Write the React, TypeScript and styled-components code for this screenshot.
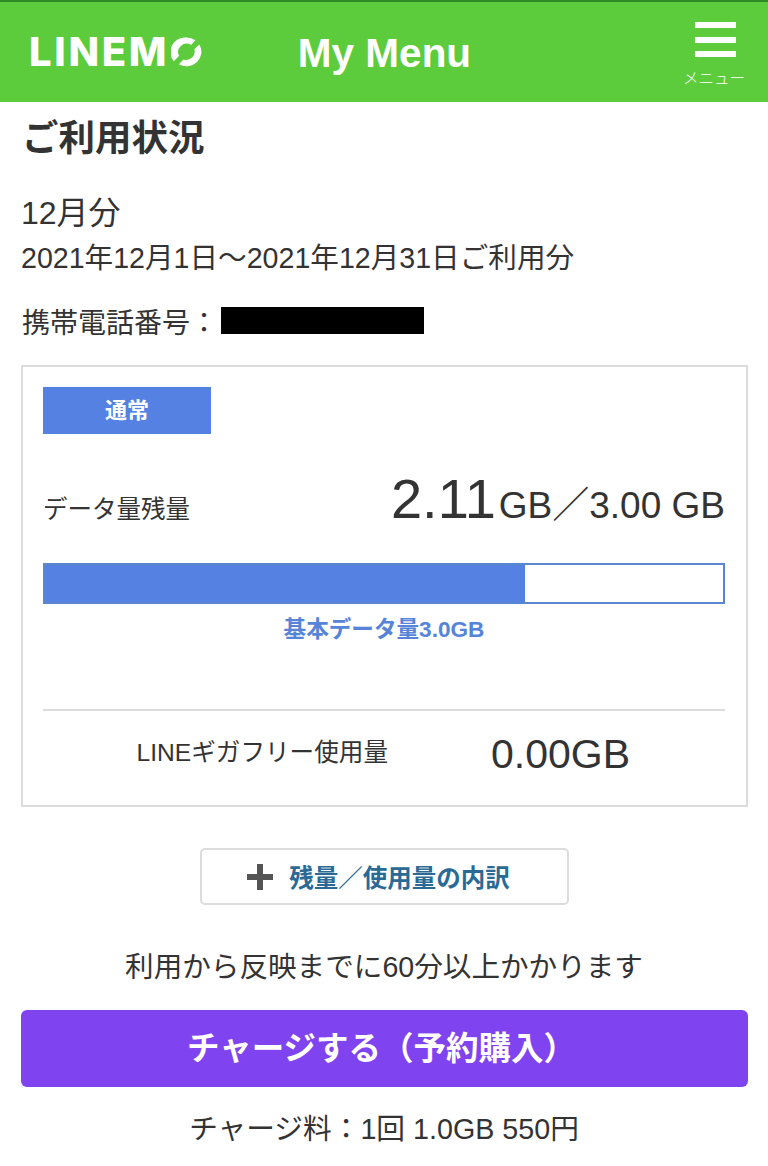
import React from "react";
import styled, { createGlobalStyle } from "styled-components";

const Global = createGlobalStyle`
  html, body { margin: 0; padding: 0; background: #fff; }
  body { font-family: "Liberation Sans", "Noto Sans CJK JP", sans-serif; color: #333; }
  * { box-sizing: border-box; }
`;

const Page = styled.div`
  width: 768px;
  height: 1166px;
  overflow: hidden;
  background: #fff;
`;

const Header = styled.header`
  height: 102px;
  background: #5ccc3c;
  border-top: 2px solid #2f8a2a;
  display: grid;
  grid-template-columns: 1fr auto 1fr;
  align-items: center;
  padding: 0 23px 0 29px;
  color: #fff;
`;

const Logo = styled.div`
  display: flex;
  align-items: center;
  gap: 2px;
  font-family: "Inter", sans-serif;
  font-weight: 800;
  font-size: 40px;
  letter-spacing: 2.7px;
  line-height: 1;
`;

const HeaderTitle = styled.h1`
  margin: 2px 5px 0 0;
  font-size: 40.5px;
  font-weight: 700;
  line-height: 1;
`;

const MenuButton = styled.div`
  justify-self: end;
  display: flex;
  flex-direction: column;
  align-items: center;
  gap: 11px;
  margin-top: 4px;
`;

const MenuBars = styled.div`
  width: 41px;
  height: 35px;
  margin-left: 3px;
  display: flex;
  flex-direction: column;
  justify-content: space-between;
`;

const MenuBar = styled.span`
  display: block;
  height: 6px;
  background: #fff;
`;

const MenuLabel = styled.span`
  font-size: 15.5px;
  line-height: 18px;
  font-weight: 300;
  font-family: "Noto Sans CJK JP", sans-serif;
`;

const Content = styled.main`
  padding: 0 20px;
`;

const Title = styled.h2`
  margin: 13px 0 0 2px;
  font-size: 36.5px;
  line-height: 48px;
  font-weight: 700;
  color: #333;
`;

const MonthLine = styled.div`
  margin: 28px 0 0 1px;
  font-size: 32px;
  line-height: 44px;
`;

const PeriodLine = styled.div`
  margin: 1px 0 0 1px;
  font-size: 28.6px;
  line-height: 44px;
  white-space: nowrap;
`;

const PhoneRow = styled.div`
  margin: 19px 0 0 2px;
  height: 44px;
  display: flex;
  align-items: center;
  font-size: 28px;
`;

const Redaction = styled.span`
  display: block;
  width: 203px;
  height: 27px;
  background: #000;
  margin: 0 0 2px 3px;
`;

const Card = styled.section`
  margin: 22px 0 0 1px;
  width: 727px;
  height: 442px;
  border: 2px solid #dcdcdc;
  padding: 20px 21px 0 20px;
`;

const Badge = styled.div`
  width: 168px;
  height: 47px;
  background: #5481e2;
  color: #fff;
  font-size: 22px;
  font-weight: 700;
  display: flex;
  align-items: center;
  justify-content: center;
  padding-bottom: 6px;
`;

const DataRow = styled.div`
  margin-top: 32px;
  height: 95px;
  display: flex;
  align-items: baseline;
  justify-content: space-between;
`;

const DataLabel = styled.span`
  font-size: 24.5px;
`;

const DataValue = styled.span`
  font-size: 37px;
  white-space: nowrap;
`;

const BigNumber = styled.span`
  font-size: 56px;
  margin-right: 3px;
`;

const Bar = styled.div`
  margin-top: 2px;
  height: 41px;
  border: 2px solid #5a86d0;
  background: #fff;
`;

const BarFill = styled.div`
  height: 100%;
  background: #5481e2;
`;

const BarCaption = styled.div`
  margin-top: 9px;
  text-align: center;
  color: #5684d8;
  font-size: 22.6px;
  font-weight: 700;
  line-height: 34px;
`;

const FreeRow = styled.div`
  margin-top: 62px;
  height: 88px;
  border-top: 2px solid #dcdcdc;
  display: grid;
  grid-template-columns: 345px 1fr;
  align-items: center;
`;

const FreeLabel = styled.span`
  font-size: 24.6px;
  text-align: right;
  margin-bottom: 8px;
`;

const FreeValue = styled.span`
  font-size: 41px;
  margin-left: 103px;
`;

const DetailButton = styled.button`
  display: flex;
  align-items: center;
  justify-content: center;
  gap: 15px;
  width: 369px;
  height: 57px;
  margin: 41px auto 0;
  background: #fff;
  border: 2px solid #dcdcdc;
  border-radius: 5px;
  font-family: inherit;
  font-size: 24.5px;
  font-weight: 700;
  color: #2a6a94;
  padding: 0 12px 0 0;
`;

const PlusIcon = styled.svg`
  width: 28px;
  height: 28px;
  fill: #555;
  flex: none;
`;

const Note = styled.p`
  margin: 40px 0 0;
  text-align: center;
  font-size: 28.6px;
  line-height: 44px;
`;

const ChargeButton = styled.button`
  display: block;
  width: 727px;
  height: 77px;
  margin: 21px 0 0 1px;
  border: 0;
  border-radius: 6px;
  background: #7f43ef;
  color: #fff;
  font-family: inherit;
  font-size: 32.5px;
  font-weight: 700;
  padding: 0 6px 6px 0;
`;

const ChargeNote = styled.p`
  margin: 20px 0 0;
  text-align: center;
  font-size: 28.7px;
  line-height: 44px;
`;

const LogoO = () => (
  <svg width="31" height="30" viewBox="0 0 30 30" preserveAspectRatio="none" aria-hidden="true">
    <path
      d="M15 0.5a14.5 14.5 0 0 1 8.6 2.8l-4.2 4.6a8.3 8.3 0 0 0-11.6 10.9l-5 5.4A14.5 14.5 0 0 1 15 0.5zM27.4 7.4a14.5 14.5 0 0 1-19.8 19.9l4.4-4.9a8.3 8.3 0 0 0 10.6-10.2z"
      fill="#fff"
    />
  </svg>
);

export default function App() {
  return (
    <Page>
      <Global />
      <Header>
        <Logo>
          LINEM
          <LogoO />
        </Logo>
        <HeaderTitle>My Menu</HeaderTitle>
        <MenuButton>
          <MenuBars>
            <MenuBar />
            <MenuBar />
            <MenuBar />
          </MenuBars>
          <MenuLabel>メニュー</MenuLabel>
        </MenuButton>
      </Header>
      <Content>
        <Title>ご利用状況</Title>
        <MonthLine>12月分</MonthLine>
        <PeriodLine>2021年12月1日～2021年12月31日ご利用分</PeriodLine>
        <PhoneRow>
          携帯電話番号：
          <Redaction />
        </PhoneRow>
        <Card>
          <Badge>通常</Badge>
          <DataRow>
            <DataLabel>データ量残量</DataLabel>
            <DataValue>
              <BigNumber>2.11</BigNumber>GB／3.00 GB
            </DataValue>
          </DataRow>
          <Bar>
            <BarFill style={{ width: "70.8%" }} />
          </Bar>
          <BarCaption>基本データ量3.0GB</BarCaption>
          <FreeRow>
            <FreeLabel>LINEギガフリー使用量</FreeLabel>
            <FreeValue>0.00GB</FreeValue>
          </FreeRow>
        </Card>
        <DetailButton>
          <PlusIcon viewBox="0 0 28 28" aria-hidden="true">
            <path d="M11 1h6v10h10v6H17v10h-6V17H1v-6h10z" />
          </PlusIcon>
          残量／使用量の内訳
        </DetailButton>
        <Note>利用から反映までに60分以上かかります</Note>
        <ChargeButton>チャージする（予約購入）</ChargeButton>
        <ChargeNote>チャージ料：1回 1.0GB 550円</ChargeNote>
      </Content>
    </Page>
  );
}
